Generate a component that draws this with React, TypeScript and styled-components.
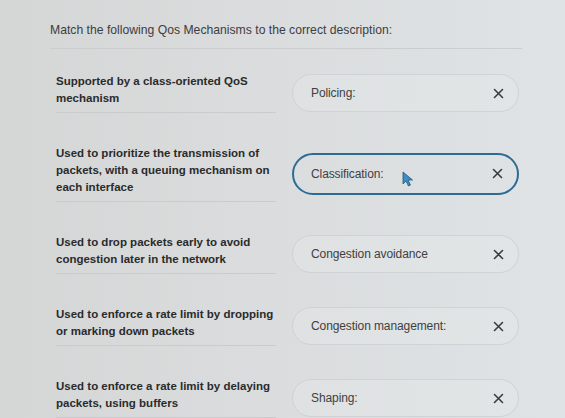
import React from "react";
import styled, { createGlobalStyle } from "styled-components";

const Global = createGlobalStyle`
  html, body {
    margin: 0;
    padding: 0;
    background: linear-gradient(90deg, #d5d6d6 0%, #dadcdd 45%, #dfe3e5 100%);
    font-family: "Liberation Sans", Arial, sans-serif;
  }
  #root { min-height: 418px; }
`;

const Page = styled.div`
  width: 565px;
  height: 418px;
  box-sizing: border-box;
  padding: 22px 43px 0 50px;
  overflow: hidden;
  position: relative;
`;

const Prompt = styled.div`
  font-size: 12.2px;
  line-height: 16px;
  color: #3d3e40;
  padding-bottom: 10px;
  border-bottom: 1px solid #cbcdce;
`;

const Pairs = styled.div`
  display: flex;
  flex-direction: column;
  gap: 32px;
  padding-top: 24px;
`;

const Pair = styled.div`
  display: grid;
  grid-template-columns: 220px 227px;
  column-gap: 16px;
  align-items: center;
  padding-left: 6px;
`;

const Description = styled.div`
  font-size: 11.5px;
  font-weight: 700;
  line-height: 17px;
  color: #2a2b2c;
  padding-bottom: 5px;
  border-bottom: 1px solid #c9cbcc;
`;

const Answer = styled.div<{ $focused?: boolean }>`
  height: ${(p) => (p.$focused ? 42 : 38)}px;
  box-sizing: border-box;
  display: flex;
  align-items: center;
  justify-content: space-between;
  padding: 0 14px 0 ${(p) => (p.$focused ? 17 : 18)}px;
  border-radius: 21px;
  border: ${(p) => (p.$focused ? "2px solid #2d6b95" : "1px solid #cfd3d5")};
  background: ${(p) => (p.$focused ? "transparent" : "rgba(236, 239, 240, 0.25)")};
`;

const Label = styled.span`
  font-size: 12px;
  color: #3e3f41;
  letter-spacing: -0.1px;
`;

const Clear = styled.button`
  border: 0;
  background: none;
  padding: 0;
  width: 12px;
  height: 12px;
  display: flex;
  align-items: center;
  justify-content: center;
  color: #3a3b3c;
  cursor: pointer;
`;

const Pointer = styled.svg`
  position: absolute;
  left: 402px;
  top: 171px;
  pointer-events: none;
`;

const pairs = [
  { text: "Supported by a class-oriented QoS mechanism", answer: "Policing:" },
  {
    text: "Used to prioritize the transmission of packets, with a queuing mechanism on each interface",
    answer: "Classification:",
    focused: true,
  },
  { text: "Used to drop packets early to avoid congestion later in the network", answer: "Congestion avoidance" },
  { text: "Used to enforce a rate limit by dropping or marking down packets", answer: "Congestion management:" },
  { text: "Used to enforce a rate limit by delaying packets, using buffers", answer: "Shaping:" },
];

function CrossIcon() {
  return (
    <svg width="11" height="11" viewBox="0 0 11 11">
      <path d="M1.5 1.5 L9.5 9.5 M9.5 1.5 L1.5 9.5" stroke="currentColor" strokeWidth="1.6" strokeLinecap="round" />
    </svg>
  );
}

export default function App() {
  return (
    <>
      <Global />
      <Page>
        <Prompt>Match the following Qos Mechanisms to the correct description:</Prompt>
        <Pairs>
          {pairs.map((p) => (
            <Pair key={p.answer}>
              <Description>{p.text}</Description>
              <Answer $focused={p.focused}>
                <Label>{p.answer}</Label>
                <Clear aria-label="Clear">
                  <CrossIcon />
                </Clear>
              </Answer>
            </Pair>
          ))}
        </Pairs>
        <Pointer width="12" height="16" viewBox="0 0 12 16">
          <path d="M1 1 L1 13 L4 10 L6.5 15 L8.5 14 L6 9 L10.5 9 Z" fill="#3c8fc4" stroke="#1f5577" strokeWidth="0.8" strokeLinejoin="round" />
        </Pointer>
      </Page>
    </>
  );
}
